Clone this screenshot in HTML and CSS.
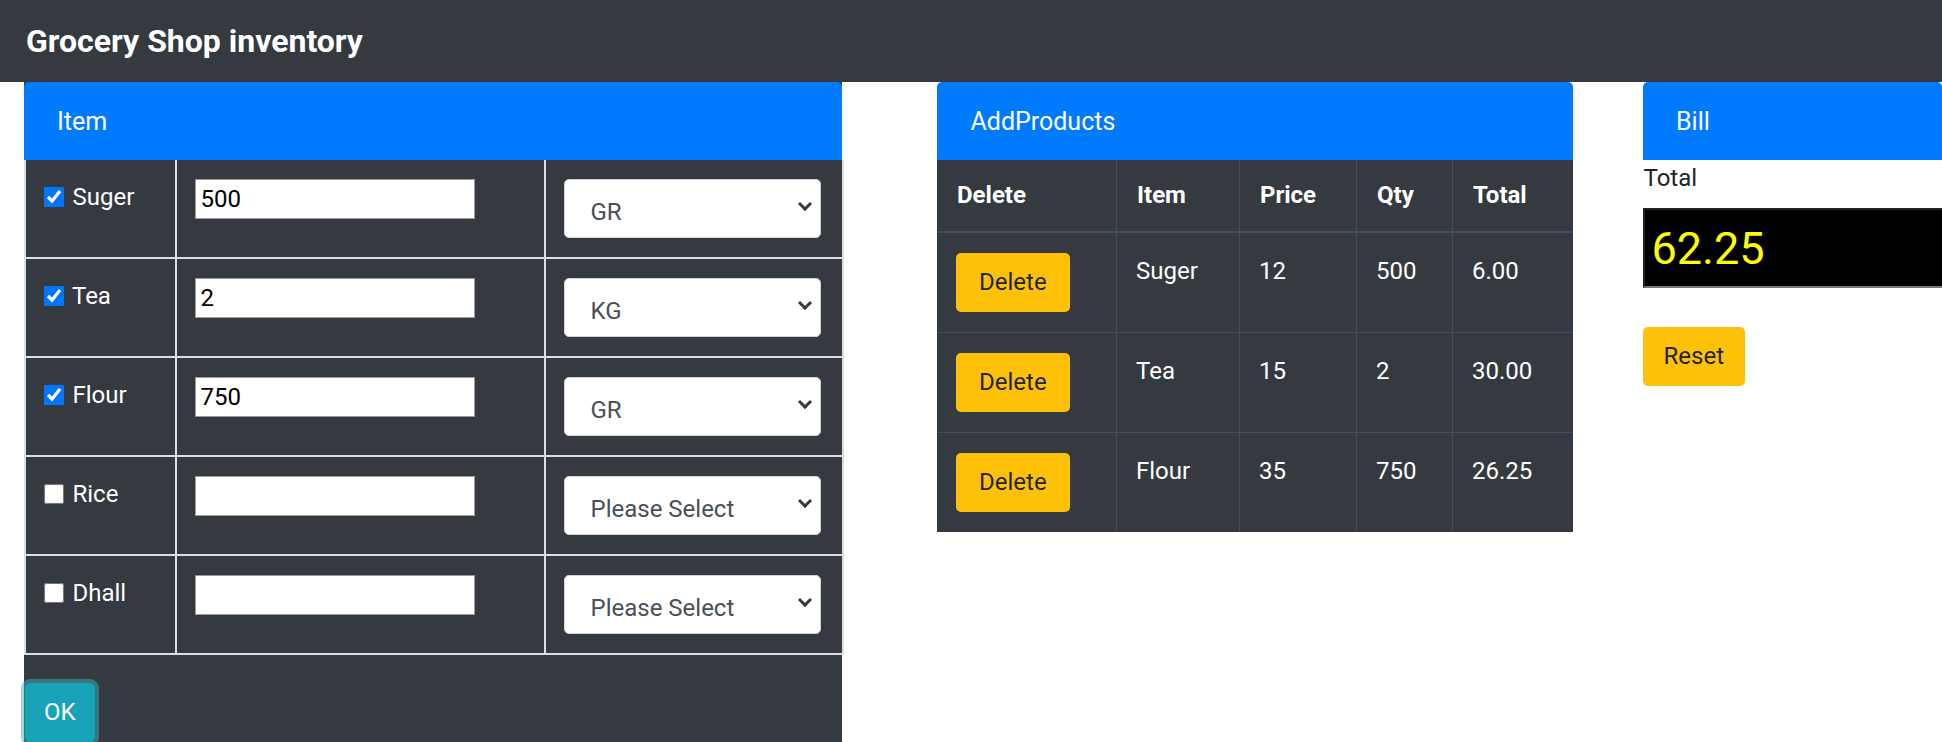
FILE: index.html
```html
<!DOCTYPE html>
<html lang="en">
<head>
    <meta charset="UTF-8">
    <meta name="viewport" content="width=device-width, initial-scale=1.0">
    <title>Grocery Shop inventory</title>
    <link rel="stylesheet" href="styles.css">
</head>
<body>
    <nav class="navbar">
        <span class="brand">Grocery Shop inventory</span>
    </nav>

    <div class="main">
        <section class="card card-item">
            <div class="card-header">Item</div>
            <table class="item-table">
                <colgroup>
                    <col class="c-name">
                    <col class="c-qty">
                    <col class="c-unit">
                </colgroup>
                <tr>
                    <td><label><input type="checkbox" checked> Suger</label></td>
                    <td><input type="text" class="qty" value="500"></td>
                    <td><span class="unit"><select><option>GR</option></select></span></td>
                </tr>
                <tr>
                    <td><label><input type="checkbox" checked> Tea</label></td>
                    <td><input type="text" class="qty" value="2"></td>
                    <td><span class="unit"><select><option>KG</option></select></span></td>
                </tr>
                <tr>
                    <td><label><input type="checkbox" checked> Flour</label></td>
                    <td><input type="text" class="qty" value="750"></td>
                    <td><span class="unit"><select><option>GR</option></select></span></td>
                </tr>
                <tr>
                    <td><label><input type="checkbox"> Rice</label></td>
                    <td><input type="text" class="qty" value=""></td>
                    <td><span class="unit"><select><option>Please Select</option></select></span></td>
                </tr>
                <tr>
                    <td><label><input type="checkbox"> Dhall</label></td>
                    <td><input type="text" class="qty" value=""></td>
                    <td><span class="unit"><select><option>Please Select</option></select></span></td>
                </tr>
            </table>
            <div class="card-foot">
                <button class="btn btn-ok">OK</button>
            </div>
        </section>

        <section class="card card-products">
            <div class="card-header">AddProducts</div>
            <table class="product-table">
                <colgroup>
                    <col class="p-del">
                    <col class="p-item">
                    <col class="p-price">
                    <col class="p-qty">
                    <col class="p-total">
                </colgroup>
                <thead>
                    <tr>
                        <th>Delete</th>
                        <th>Item</th>
                        <th>Price</th>
                        <th>Qty</th>
                        <th>Total</th>
                    </tr>
                </thead>
                <tbody>
                    <tr>
                        <td><button class="btn btn-warning">Delete</button></td>
                        <td>Suger</td>
                        <td>12</td>
                        <td>500</td>
                        <td>6.00</td>
                    </tr>
                    <tr>
                        <td><button class="btn btn-warning">Delete</button></td>
                        <td>Tea</td>
                        <td>15</td>
                        <td>2</td>
                        <td>30.00</td>
                    </tr>
                    <tr>
                        <td><button class="btn btn-warning">Delete</button></td>
                        <td>Flour</td>
                        <td>35</td>
                        <td>750</td>
                        <td>26.25</td>
                    </tr>
                </tbody>
            </table>
        </section>

        <section class="card card-bill">
            <div class="card-header">Bill</div>
            <label class="total-label" for="total">Total</label>
            <input type="text" id="total" class="total" value="62.25" readonly>
            <button class="btn btn-warning btn-reset">Reset</button>
        </section>
    </div>
</body>
</html>
```

FILE: styles.css
```css
html, body {
    overflow: hidden;
}

body {
    margin: 0;
    font-family: Roboto, "Noto Sans", Arial, sans-serif;
    font-size: 24px;
    line-height: 37px;
    color: #212529;
    background-color: #fff;
}

.navbar {
    height: 82px;
    background-color: #343a40;
    display: flex;
    align-items: center;
    padding: 0 26px;
}

.brand {
    color: #fff;
    font-size: 32px;
    font-weight: 700;
}

.main {
    display: flex;
    align-items: flex-start;
    padding-left: 23.5px;
}

.card {
    flex-shrink: 0;
}

.card-header {
    height: 78px;
    padding: 0 33.5px;
    display: flex;
    align-items: center;
    background-color: #007bff;
    color: #fff;
    font-size: 25px;
    border-radius: 5px 5px 0 0;
}

/* Item card */
.card-item {
    width: 818.5px;
    margin-right: 95px;
    background-color: #343a40;
}

.item-table {
    width: 100%;
    table-layout: fixed;
    border-collapse: collapse;
    color: #fff;
}

.c-name { width: 151px; }
.c-qty { width: 369px; }
.c-unit { width: 298px; }

.item-table td {
    border: 2px solid #dcdfe2;
    padding: 19px 18px;
    vertical-align: top;
}

.item-table tr:first-child td {
    border-top: none;
}

.item-table input[type="checkbox"] {
    width: 20px;
    height: 20px;
    margin: 0 3px 0 0;
    vertical-align: -2px;
    accent-color: #0075ff;
}

.qty {
    width: 280px;
    height: 40px;
    box-sizing: border-box;
    padding: 0 5px;
    border: 1px solid #9a9a9a;
    font-family: inherit;
    font-size: 24px;
    color: #000;
}

.unit {
    position: relative;
    display: inline-block;
}

.unit select {
    width: 257px;
    height: 59px;
    box-sizing: border-box;
    padding: 6px 40px 0 26px;
    border: 1px solid #ced4da;
    border-radius: 5px;
    background-color: #fff;
    color: #495057;
    font-family: inherit;
    font-size: 24px;
    appearance: none;
    -webkit-appearance: none;
}

.unit::after {
    content: "";
    position: absolute;
    top: 20px;
    right: 11px;
    width: 7px;
    height: 7px;
    border-right: 3px solid #343a40;
    border-bottom: 3px solid #343a40;
    transform: rotate(45deg);
    pointer-events: none;
}

.card-foot {
    height: 59px;
    padding-top: 28px;
}

.btn {
    font-family: inherit;
    font-size: 24px;
    line-height: 37px;
    border: 1px solid transparent;
    border-radius: 5px;
    cursor: pointer;
}

.btn-ok {
    margin-left: 1.5px;
    padding: 10px 18px;
    background-color: #17a2b8;
    color: #fff;
    box-shadow: 0 0 0 4px rgba(58, 176, 195, 0.5);
}

.btn-warning {
    padding: 10px 22px;
    background-color: #ffc107;
    color: #212529;
}

/* AddProducts card */
.card-products {
    width: 635.5px;
    margin-right: 70px;
}

.product-table {
    width: 100%;
    table-layout: fixed;
    border-collapse: collapse;
    background-color: #343a40;
    color: #fff;
}

.p-del { width: 179.5px; }
.p-item { width: 123px; }
.p-price { width: 117px; }
.p-qty { width: 96px; }
.p-total { width: 120px; }

.product-table th,
.product-table td {
    text-align: left;
    vertical-align: top;
    border: 1px solid #454d55;
}

.product-table th {
    padding: 17px 20px;
    font-weight: 700;
    border-top: none;
    border-bottom: 2px solid #454d55;
}

.product-table td {
    padding: 20px 19px;
}

.product-table tr > :first-child {
    border-left: none;
}

.product-table tr > :last-child {
    border-right: none;
}

.product-table tbody tr:last-child td {
    border-bottom: none;
}

/* Bill card */
.card-bill {
    flex: 1;
    min-width: 0;
}

.total-label {
    display: block;
    padding-left: 1px;
}

.total {
    display: block;
    width: 100%;
    height: 80px;
    box-sizing: border-box;
    margin-top: 11px;
    padding: 0 7px;
    background-color: #000;
    color: #ffff00;
    font-family: inherit;
    font-size: 45px;
    border: 2px inset #767676;
    border-right: none;
}

.btn-reset {
    margin-top: 39px;
    padding: 10px 20px;
}
```
